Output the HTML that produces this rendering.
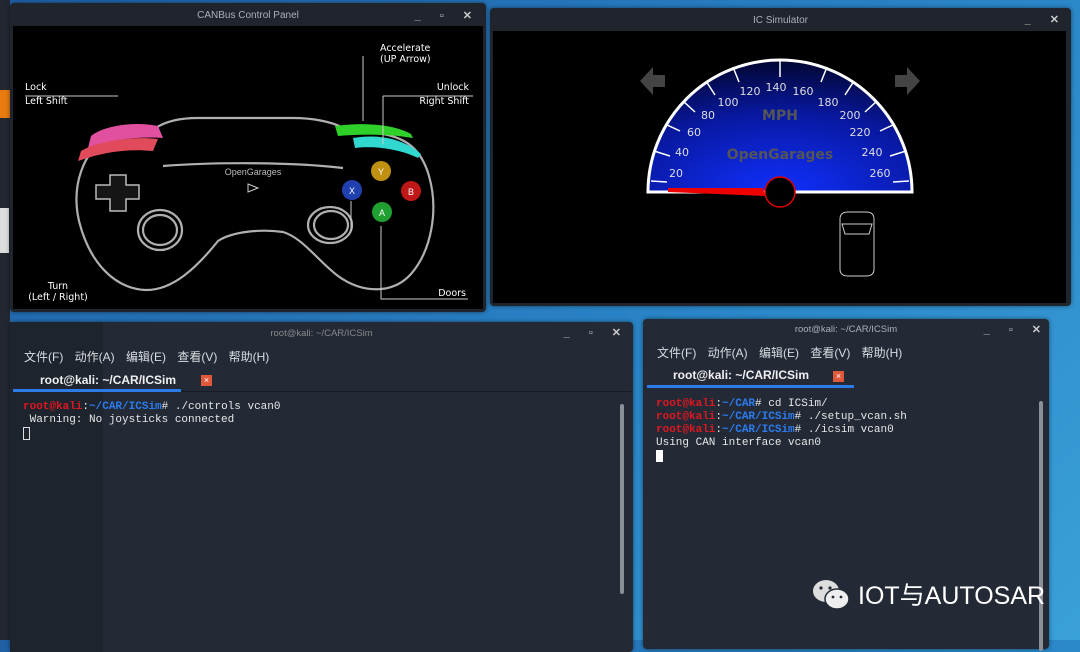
<!DOCTYPE html>
<html><head><meta charset="utf-8"><style>
body{margin:0;width:1080px;height:640px;overflow:hidden;position:relative;background:linear-gradient(135deg,#1f5fa6 0%,#2a86c8 60%,#3aa0d8 100%);font-family:"Liberation Sans","Noto Sans CJK SC",sans-serif}
.abs{position:absolute}
.win{position:absolute;background:#1f242d;border-radius:4px;box-shadow:0 0 4px rgba(0,0,0,.5)}
.tt{position:absolute;left:0;right:0;text-align:center;color:#aab0b8;font-size:10px}
.btns{position:absolute;color:#ccc;font-size:11px;font-weight:bold;letter-spacing:8px}
.mono{font-family:"Liberation Mono",monospace;font-size:11px;line-height:13px;color:#e6e6e6;white-space:pre}
.r{color:#e0161f;font-weight:bold}.b{color:#2a7cf0;font-weight:bold}
.menu{position:absolute;color:#d8dce0;font-size:12px;word-spacing:8px}
.tab{position:absolute;color:#f0f0f0;font-size:12px;font-weight:bold}
.x{position:absolute;width:11px;height:11px;background:#e0583a;color:#fff;font-size:9px;line-height:11px;text-align:center}
</style></head><body>
<div class="abs" style="left:0;top:0;width:10px;height:640px;background:#222730"></div>
<div class="abs" style="left:0;top:90px;width:10px;height:28px;background:#e87a10"></div>
<div class="abs" style="left:0;top:208px;width:9px;height:45px;background:#ddd"></div>

<!-- CANBus -->
<div class="win" style="left:10px;top:3px;width:476px;height:309px">
<div class="tt" style="top:7px">CANBus Control Panel</div>
<div class="btns" style="right:6px;top:6px">_ ▫ ✕</div>
<div class="abs" style="left:3px;top:23px;width:470px;height:283px;background:#000">
<svg width="470" height="283" style="position:absolute;left:0;top:0">
<g fill="none" stroke="#cfcfcf" stroke-width="2.2" opacity=".85">
<path d="M95 112 C70 125 58 160 66 195 C76 235 100 262 132 264 C160 265 185 240 205 215 C220 205 250 203 270 206 C290 212 305 235 325 250 C350 268 380 268 398 248 C418 225 426 185 416 150 C408 122 392 112 370 108 L330 102 C320 96 300 92 280 92 L185 92 C165 92 150 96 140 104 Z"/>
<path d="M150 140 C200 136 280 136 330 142"/>
<ellipse cx="147" cy="204" rx="22" ry="20"/><ellipse cx="147" cy="204" rx="17" ry="15"/><ellipse cx="317" cy="199" rx="22" ry="18"/><ellipse cx="318" cy="199" rx="17" ry="14"/>
</g>
<path d="M83 159 h14 v-10 h16 v10 h13 v14 h-13 v12 h-16 v-12 h-14 z" fill="#151515" stroke="#bbb" stroke-width="1.5"/>
<path d="M78 110 C90 100 120 95 145 100 L150 112 C120 110 95 115 75 122 Z" fill="#e0509e"/>
<path d="M68 125 C85 115 120 110 145 113 L140 125 C110 122 85 128 65 135 Z" fill="#e04a5a"/>
<path d="M322 100 C350 96 380 98 398 108 L400 112 C375 108 350 108 325 110 Z" fill="#30d02a"/>
<path d="M340 112 C365 108 390 112 408 128 L405 132 C385 122 360 120 342 122 Z" fill="#30d8d0"/>
<circle cx="339" cy="164" r="10" fill="#2040b0"/><circle cx="368" cy="145" r="10" fill="#c09010"/>
<circle cx="398" cy="165" r="10" fill="#c01818"/><circle cx="369" cy="186" r="10" fill="#20a030"/>
<g fill="#fff" font-size="9" text-anchor="middle" font-family="Liberation Sans"><text x="339" y="168">X</text><text x="368" y="149">Y</text><text x="398" y="169">B</text><text x="369" y="190">A</text></g>
<text x="240" y="149" fill="#bbb" font-size="9" text-anchor="middle" font-family="Liberation Sans">OpenGarages</text>
<path d="M235 158 l10 4 l-10 4 z" fill="none" stroke="#ccc"/>
<g stroke="#ccc" fill="none"><path d="M12 70 H105"/><path d="M350 30 V95"/><path d="M370 70 H460"/><path d="M370 70 V118"/><path d="M338 175 V205"/><path d="M368 200 V273 H455"/></g>
<g fill="#fff" font-size="9.5" font-family="DejaVu Sans"><text x="12" y="64">Lock</text><text x="12" y="78">Left Shift</text><text x="367" y="25">Accelerate</text><text x="367" y="36">(UP Arrow)</text><text x="456" y="64" text-anchor="end">Unlock</text><text x="456" y="78" text-anchor="end">Right Shift</text><text x="45" y="263" text-anchor="middle">Turn</text><text x="45" y="274" text-anchor="middle">(Left / Right)</text><text x="453" y="270" text-anchor="end">Doors</text></g>
</svg></div></div>

<!-- IC Simulator -->
<div class="win" style="left:490px;top:8px;width:581px;height:298px">
<div class="tt" style="top:7px">IC Simulator</div>
<div class="btns" style="right:4px;top:5px">_ ✕</div>
<div class="abs" style="left:3px;top:23px;width:573px;height:272px;background:#000">
<svg width="573" height="272" style="position:absolute;left:0;top:0">
<defs><radialGradient id="g" cx="0.5" cy="1" r="1"><stop offset="0" stop-color="#1030ff"/><stop offset=".6" stop-color="#0818a0"/><stop offset="1" stop-color="#020630"/></radialGradient></defs>
<path d="M155 161 A132 132 0 0 1 419 161 Z" fill="url(#g)" stroke="#fff" stroke-width="3"/>
<path d="M160 36 l-13 14 l13 14 v-8 h12 v-12 h-12 z" fill="#444"/>
<path d="M414 36 l13 14 l-13 14 v-8 h-12 v-12 h12 z" fill="#444"/>
<g stroke="#fff" stroke-width="1.5">
<path d="M158 150 L174 151"/><path d="M161 120 L177 125"/><path d="M172 93 L187 100"/><path d="M190 70 L202 81"/><path d="M213 50 L222 64"/><path d="M240 36 L246 51"/><path d="M287 28 L287 46"/><path d="M334 36 L328 51"/><path d="M361 50 L352 64"/><path d="M384 70 L372 81"/><path d="M402 93 L387 100"/><path d="M413 120 L397 125"/><path d="M416 150 L400 151"/>
</g>
<g fill="#ddd" font-size="11" font-family="DejaVu Sans" text-anchor="middle">
<text x="183" y="146">20</text><text x="189" y="125">40</text><text x="201" y="105">60</text><text x="215" y="88">80</text><text x="235" y="75">100</text><text x="257" y="64">120</text><text x="283" y="60">140</text><text x="310" y="64">160</text><text x="335" y="75">180</text><text x="357" y="88">200</text><text x="367" y="105">220</text><text x="379" y="125">240</text><text x="387" y="146">260</text></g>
<text x="287" y="89" fill="#555" font-size="14" font-weight="bold" text-anchor="middle" font-family="DejaVu Sans">MPH</text>
<text x="287" y="128" fill="#555" font-size="14" font-weight="bold" text-anchor="middle" font-family="DejaVu Sans">OpenGarages</text>
<path d="M175 157 L270 157 L272 165 L175 161 Z" fill="#e00"/>
<circle cx="287" cy="161" r="15" fill="#000" stroke="#d00" stroke-width="1.5"/>
<path d="M347 188 Q347 181 355 181 H373 Q381 181 381 188 V238 Q381 245 373 245 H355 Q347 245 347 238 Z" fill="none" stroke="#ccc"/>
<path d="M349 193 H379 L376 203 H352 Z" fill="none" stroke="#ccc"/>
</svg></div></div>

<!-- Terminal 1 -->
<div class="win" style="left:10px;top:322px;width:623px;height:330px;background:#232a36">
<div class="abs" style="left:0;top:0;width:93px;height:330px;background:#1e242e"></div>
<div class="tt" style="top:6px;font-size:9.5px;color:#888">root@kali: ~/CAR/ICSim</div>
<div class="btns" style="right:4px;top:4px">_ ▫ ✕</div>
<div class="menu" style="left:14px;top:26px">文件(F) 动作(A) 编辑(E) 查看(V) 帮助(H)</div>
<div class="tab" style="left:30px;top:51px">root@kali: ~/CAR/ICSim</div>
<div class="x" style="left:191px;top:53px">×</div>
<div class="abs" style="left:3px;top:67px;width:168px;height:3px;background:#2a7ce8"></div>
<div class="abs" style="left:171px;top:69px;width:450px;height:1px;background:#181c22"></div>
<div class="abs" style="left:610px;top:82px;width:4px;height:190px;background:#8a9096;border-radius:2px"></div>
<div class="mono abs" style="left:13px;top:79px"><span class="r">root@kali</span>:<span class="b">~/CAR/ICSim</span># ./controls vcan0
 Warning: No joysticks connected
<span style="display:inline-block;width:5px;height:11px;border:1px solid #ddd;vertical-align:middle"></span></div>
</div>

<!-- Terminal 2 -->
<div class="win" style="left:643px;top:319px;width:406px;height:330px;background:#232a36">
<div class="tt" style="top:5px;font-size:9.5px">root@kali: ~/CAR/ICSim</div>
<div class="btns" style="right:0px;top:4px">_ ▫ ✕</div>
<div class="menu" style="left:14px;top:25px">文件(F) 动作(A) 编辑(E) 查看(V) 帮助(H)</div>
<div class="tab" style="left:30px;top:49px">root@kali: ~/CAR/ICSim</div>
<div class="x" style="left:190px;top:52px">×</div>
<div class="abs" style="left:4px;top:66px;width:207px;height:3px;background:#2a7ce8"></div>
<div class="abs" style="left:396px;top:82px;width:4px;height:250px;background:#8a9096;border-radius:2px"></div>
<div class="mono abs" style="left:13px;top:79px"><span class="r">root@kali</span>:<span class="b">~/CAR</span># cd ICSim/
<span class="r">root@kali</span>:<span class="b">~/CAR/ICSim</span># ./setup_vcan.sh
<span class="r">root@kali</span>:<span class="b">~/CAR/ICSim</span># ./icsim vcan0
Using CAN interface vcan0
<span style="display:inline-block;width:7px;height:12px;background:#fff;vertical-align:middle"></span></div>
<svg class="abs" style="left:168px;top:258px" width="42" height="36"><ellipse cx="15" cy="14" rx="13" ry="11" fill="#ddd"/><ellipse cx="26" cy="22" rx="12" ry="10" fill="#eee" stroke="#232a36" stroke-width="1.5"/><circle cx="10" cy="11" r="1.6" fill="#232a36"/><circle cx="19" cy="11" r="1.6" fill="#232a36"/><circle cx="22" cy="20" r="1.4" fill="#232a36"/><circle cx="30" cy="20" r="1.4" fill="#232a36"/></svg>
<div class="abs" style="left:215px;top:257px;color:#fff;font-size:25px;font-family:'Liberation Sans','Noto Sans CJK SC',sans-serif">IOT与AUTOSAR</div>
</div>
</body></html>
